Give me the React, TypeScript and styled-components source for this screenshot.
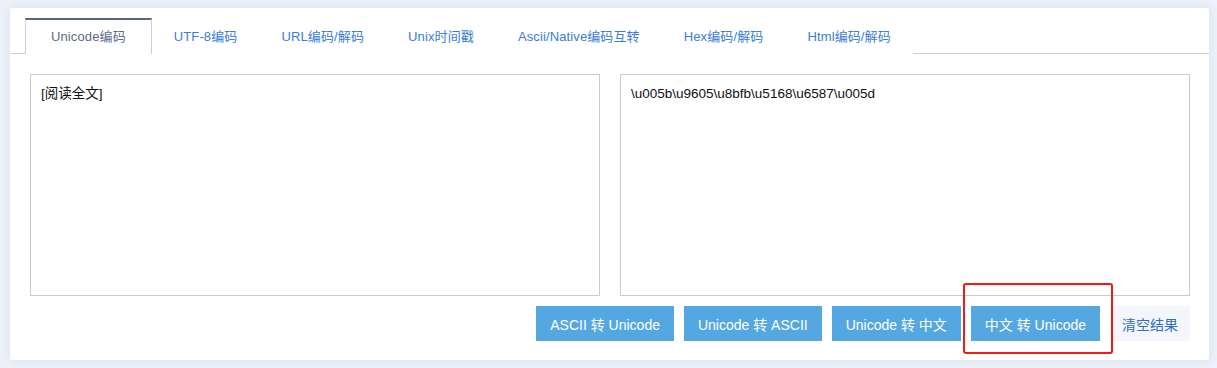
import styled, { createGlobalStyle } from "styled-components";

const GlobalStyle = createGlobalStyle`
    html, body {
        margin: 0;
        padding: 0;
        background: #edf1f8;
        font-family: "Liberation Sans", "Noto Sans CJK SC", sans-serif;
    }
`;

const Page = styled.div`
    padding: 8px 8px 8px 10px;
    height: 368px;
    box-sizing: border-box;
`;

const Card = styled.div`
    position: relative;
    width: 1199px;
    height: 352px;
    background: #fff;
    border-radius: 3px;
    box-shadow: 0 0 8px rgba(190, 205, 230, 0.45);
    padding-top: 10px;
    box-sizing: border-box;
`;

const TabBar = styled.div`
    display: flex;
    height: 35px;
    padding-left: 15px;
    border-bottom: 1px solid #c5d0e3;
`;

const Tab = styled.div<{ $active?: boolean }>`
    display: flex;
    align-items: center;
    justify-content: center;
    box-sizing: border-box;
    height: 36px;
    padding: 0 ${p => (p.$active ? "25px" : "21px")} 3px;
    font-size: 13px;
    letter-spacing: 0.12px;
    color: ${p => (p.$active ? "#5e6b88" : "#3a7dd6")};
    background: #fff;
    border: 1px solid ${p => (p.$active ? "#c5d0e3" : "transparent")};
    border-top: 2px solid ${p => (p.$active ? "#59667f" : "transparent")};
    border-bottom: none;
`;

const Body = styled.div`
    padding: 20px 19px 0 20px;
`;

const Panes = styled.div`
    display: grid;
    grid-template-columns: 1fr 1fr;
    gap: 20px;
`;

const TextBox = styled.textarea`
    height: 222px;
    box-sizing: border-box;
    border: 1px solid #c5cbd9;
    border-radius: 0;
    padding: 10px 10px;
    resize: none;
    outline: none;
    font-family: "Liberation Sans", "Noto Sans CJK SC", sans-serif;
    font-size: 13.5px;
    color: #111;
    line-height: 18px;
`;

const Actions = styled.div`
    display: flex;
    justify-content: flex-end;
    gap: 10px;
    margin-top: 10px;
`;

const Button = styled.button<{ $plain?: boolean }>`
    height: 35px;
    padding: 0 ${p => (p.$plain ? "12px" : "14px")};
    border: none;
    border-radius: 0;
    font-family: "Liberation Sans", "Noto Sans CJK SC", sans-serif;
    font-size: 14px;
    background: ${p => (p.$plain ? "#f3f7fc" : "#55a7e1")};
    color: ${p => (p.$plain ? "#2f6fbf" : "#fff")};
    cursor: pointer;
`;

const Highlight = styled.div`
    position: absolute;
    left: 953px;
    top: 275px;
    width: 150px;
    height: 71px;
    border: 2px solid #f01c12;
    border-radius: 3px;
    box-sizing: border-box;
    pointer-events: none;
`;

const tabs = [
    "Unicode编码",
    "UTF-8编码",
    "URL编码/解码",
    "Unix时间戳",
    "Ascii/Native编码互转",
    "Hex编码/解码",
    "Html编码/解码",
];

export default function App() {
    return (
        <>
            <GlobalStyle />
            <Page>
                <Card>
                    <TabBar>
                        {tabs.map((t, i) => (
                            <Tab key={t} $active={i === 0}>{t}</Tab>
                        ))}
                    </TabBar>
                    <Body>
                        <Panes>
                            <TextBox defaultValue="[阅读全文]" />
                            <TextBox defaultValue={"\\u005b\\u9605\\u8bfb\\u5168\\u6587\\u005d"} />
                        </Panes>
                        <Actions>
                            <Button>ASCII 转 Unicode</Button>
                            <Button>Unicode 转 ASCII</Button>
                            <Button>Unicode 转 中文</Button>
                            <Button>中文 转 Unicode</Button>
                            <Button $plain>清空结果</Button>
                        </Actions>
                    </Body>
                    <Highlight />
                </Card>
            </Page>
        </>
    );
}
